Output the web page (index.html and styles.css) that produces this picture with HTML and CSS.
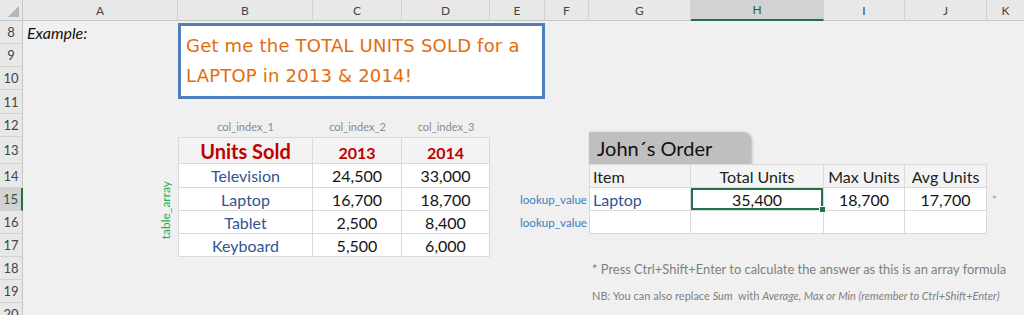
FILE: index.html
```html
<!DOCTYPE html>
<html>
<head>
<meta charset="utf-8">
<link rel="stylesheet" href="styles.css">
</head>
<body>
<div class="sheet">
  <div class="corner"><span class="tri"></span></div>
  <div class="ch">A</div>
  <div class="ch">B</div>
  <div class="ch">C</div>
  <div class="ch">D</div>
  <div class="ch">E</div>
  <div class="ch">F</div>
  <div class="ch">G</div>
  <div class="ch sel">H</div>
  <div class="ch">I</div>
  <div class="ch">J</div>
  <div class="ch last">K</div>

  <div class="rh">8</div>
  <div class="rh">9</div>
  <div class="rh">10</div>
  <div class="rh">11</div>
  <div class="rh">12</div>
  <div class="rh">13</div>
  <div class="rh">14</div>
  <div class="rh sel">15</div>
  <div class="rh">16</div>
  <div class="rh">17</div>
  <div class="rh">18</div>
  <div class="rh">19</div>
  <div class="rh">20</div>

  <div class="example">Example:</div>

  <div class="callout">Get me the TOTAL UNITS SOLD for a<br>LAPTOP in 2013 &amp; 2014!</div>

  <div class="colidx ci1">col_index_1</div>
  <div class="colidx ci2">col_index_2</div>
  <div class="colidx ci3">col_index_3</div>

  <div class="tarray">table_array</div>

  <div class="units">
    <div class="cell head big">Units Sold</div>
    <div class="cell head yr">2013</div>
    <div class="cell head yr">2014</div>
    <div class="cell item">Television</div>
    <div class="cell num">24,500</div>
    <div class="cell num">33,000</div>
    <div class="cell item">Laptop</div>
    <div class="cell num">16,700</div>
    <div class="cell num">18,700</div>
    <div class="cell item">Tablet</div>
    <div class="cell num">2,500</div>
    <div class="cell num">8,400</div>
    <div class="cell item">Keyboard</div>
    <div class="cell num">5,500</div>
    <div class="cell num">6,000</div>
  </div>

  <div class="john">John´s Order</div>

  <div class="lookup lk1">lookup_value</div>
  <div class="lookup lk2">lookup_value</div>

  <div class="order">
    <div class="cell ohead left">Item</div>
    <div class="cell ohead">Total Units</div>
    <div class="cell ohead">Max Units</div>
    <div class="cell ohead">Avg Units</div>
    <div class="cell item left">Laptop</div>
    <div class="cell num active">35,400</div>
    <div class="cell num">18,700</div>
    <div class="cell num">17,700</div>
    <div class="cell"></div>
    <div class="cell"></div>
    <div class="cell"></div>
    <div class="cell"></div>
  </div>

  <div class="star">*</div>

  <div class="note1">* Press Ctrl+Shift+Enter to calculate the answer as this is an array formula</div>
  <div class="note2">NB: You can also replace <i>Sum</i>&nbsp; with <i>Average, Max or Min (remember to Ctrl+Shift+Enter)</i></div>
</div>
</body>
</html>
```

FILE: styles.css
```css
* {
  box-sizing: border-box;
  margin: 0;
  padding: 0;
}

html, body {
  width: 1024px;
  height: 315px;
  overflow: hidden;
}

body {
  background: #f0f0f0;
  font-family: Lato, "Open Sans", sans-serif;
  color: #222;
}

.sheet {
  display: grid;
  grid-template-columns: 23px 155px 135px 89px 88px 55px 44px 102px 133px 81px 82px 1fr;
  grid-template-rows: 21px 23px 23px 23px 24px 23px 27px 24px 23px 23px 23px 23px 23px 23px;
}

.corner {
  grid-row: 1;
  grid-column: 1;
  background: #e8e8e8;
  border-right: 1px solid #c6c6c6;
  border-bottom: 1px solid #c6c6c6;
  display: flex;
  align-items: flex-end;
  justify-content: flex-end;
  padding: 0 3px 3px 0;
}

.tri {
  width: 0;
  height: 0;
  border-left: 11px solid transparent;
  border-bottom: 11px solid #b5b5b5;
}

.ch {
  grid-row: 1;
  background: #e8e8e8;
  border-right: 1px solid #d2d2d2;
  border-bottom: 1px solid #c6c6c6;
  font-size: 12px;
  color: #444;
  display: flex;
  align-items: center;
  justify-content: center;
}

.ch.last {
  border-right: none;
}

.ch.sel {
  background: #d2d2d2;
  color: #2a5d3c;
  border-bottom: 2px solid #217346;
}

.rh {
  grid-column: 1;
  background: #e8e8e8;
  border-right: 1px solid #c6c6c6;
  border-bottom: 1px solid #d2d2d2;
  font-size: 13px;
  color: #444;
  display: flex;
  align-items: center;
  justify-content: center;
}

.rh.sel {
  background: #d2d2d2;
  border-right: 2px solid #217346;
  color: #2a5d3c;
}

.example {
  grid-column: 2;
  grid-row: 2;
  align-self: center;
  padding-left: 4px;
  font-size: 16px;
  font-style: italic;
  color: #111;
}

.callout {
  grid-column: 3 / 7;
  grid-row: 2 / 6;
  margin-top: 2px;
  height: 76px;
  border: 3px solid #4f7fbd;
  background: #fff;
  color: #e46c0a;
  font-family: "DejaVu Sans", sans-serif;
  font-size: 18px;
  letter-spacing: 0.2px;
  line-height: 30px;
  padding: 5px 0 0 5px;
  white-space: nowrap;
}

.colidx {
  grid-row: 6;
  align-self: center;
  text-align: center;
  font-size: 11px;
  color: #8a8a8a;
  padding-top: 2px;
}

.ci1 { grid-column: 3; }
.ci2 { grid-column: 4; }
.ci3 { grid-column: 5; }

.tarray {
  grid-column: 2;
  grid-row: 8 / 12;
  justify-self: end;
  align-self: center;
  margin-right: 5px;
  writing-mode: vertical-rl;
  transform: rotate(180deg);
  color: #1fae5a;
  font-size: 12px;
}

.units {
  grid-column: 3 / 6;
  grid-row: 7 / 12;
  display: grid;
  grid-template-columns: 134px 89px 88px;
  grid-template-rows: 26px 24px 23px 23px 23px;
  border-top: 1px solid #d9d9d9;
  border-left: 1px solid #d9d9d9;
}

.cell {
  background: #fff;
  border-right: 1px solid #d9d9d9;
  border-bottom: 1px solid #d9d9d9;
  display: flex;
  align-items: center;
  justify-content: center;
  font-size: 16px;
  white-space: nowrap;
}

.cell.head {
  background: #f3f3f3;
}

.cell.big {
  font-size: 20px;
  font-weight: 700;
  color: #c00000;
}

.cell.yr {
  font-size: 16px;
  font-weight: 700;
  color: #c00000;
  padding-top: 3px;
}

.cell.item {
  color: #2f5593;
}

.cell.num {
  color: #141414;
}

.john {
  grid-column: 8 / 10;
  grid-row: 6 / 8;
  align-self: end;
  justify-self: start;
  width: 162px;
  height: 32px;
  background: #bfbfbf;
  border-radius: 0 8px 0 0;
  box-shadow: 1px 1px 3px rgba(0, 0, 0, 0.25);
  display: flex;
  align-items: center;
  padding-left: 8px;
  font-size: 20px;
  color: #111;
}

.lookup {
  grid-column: 6 / 8;
  justify-self: end;
  align-self: center;
  padding-right: 2px;
  font-size: 11.6px;
  color: #3b7fc4;
}

.lk1 { grid-row: 9; }
.lk2 { grid-row: 10; }

.order {
  grid-column: 8 / 12;
  grid-row: 8 / 11;
  display: grid;
  grid-template-columns: 101px 133px 81px 82px;
  grid-template-rows: 23px 23px 23px;
  border-top: 1px solid #d9d9d9;
  border-left: 1px solid #d9d9d9;
}

.cell.ohead {
  background: #f3f3f3;
  color: #222;
}

.cell.left {
  justify-content: flex-start;
  padding-left: 3px;
}

.cell.active {
  position: relative;
  box-shadow: inset 0 0 0 2px #217346;
}

.cell.active::after {
  content: "";
  position: absolute;
  right: -3px;
  bottom: -3px;
  width: 5px;
  height: 5px;
  background: #217346;
  border: 1px solid #fff;
}

.star {
  grid-column: 12;
  grid-row: 9;
  align-self: center;
  padding-left: 5px;
  font-size: 11px;
  color: #999;
}

.note1 {
  grid-column: 8 / 13;
  grid-row: 12;
  align-self: center;
  padding-left: 3px;
  white-space: nowrap;
  font-size: 12.9px;
  color: #7f7f7f;
}

.note2 {
  grid-column: 8 / 13;
  grid-row: 13;
  align-self: end;
  padding-left: 3px;
  padding-bottom: 1px;
  white-space: nowrap;
  font-size: 11px;
  color: #7f7f7f;
}
```
